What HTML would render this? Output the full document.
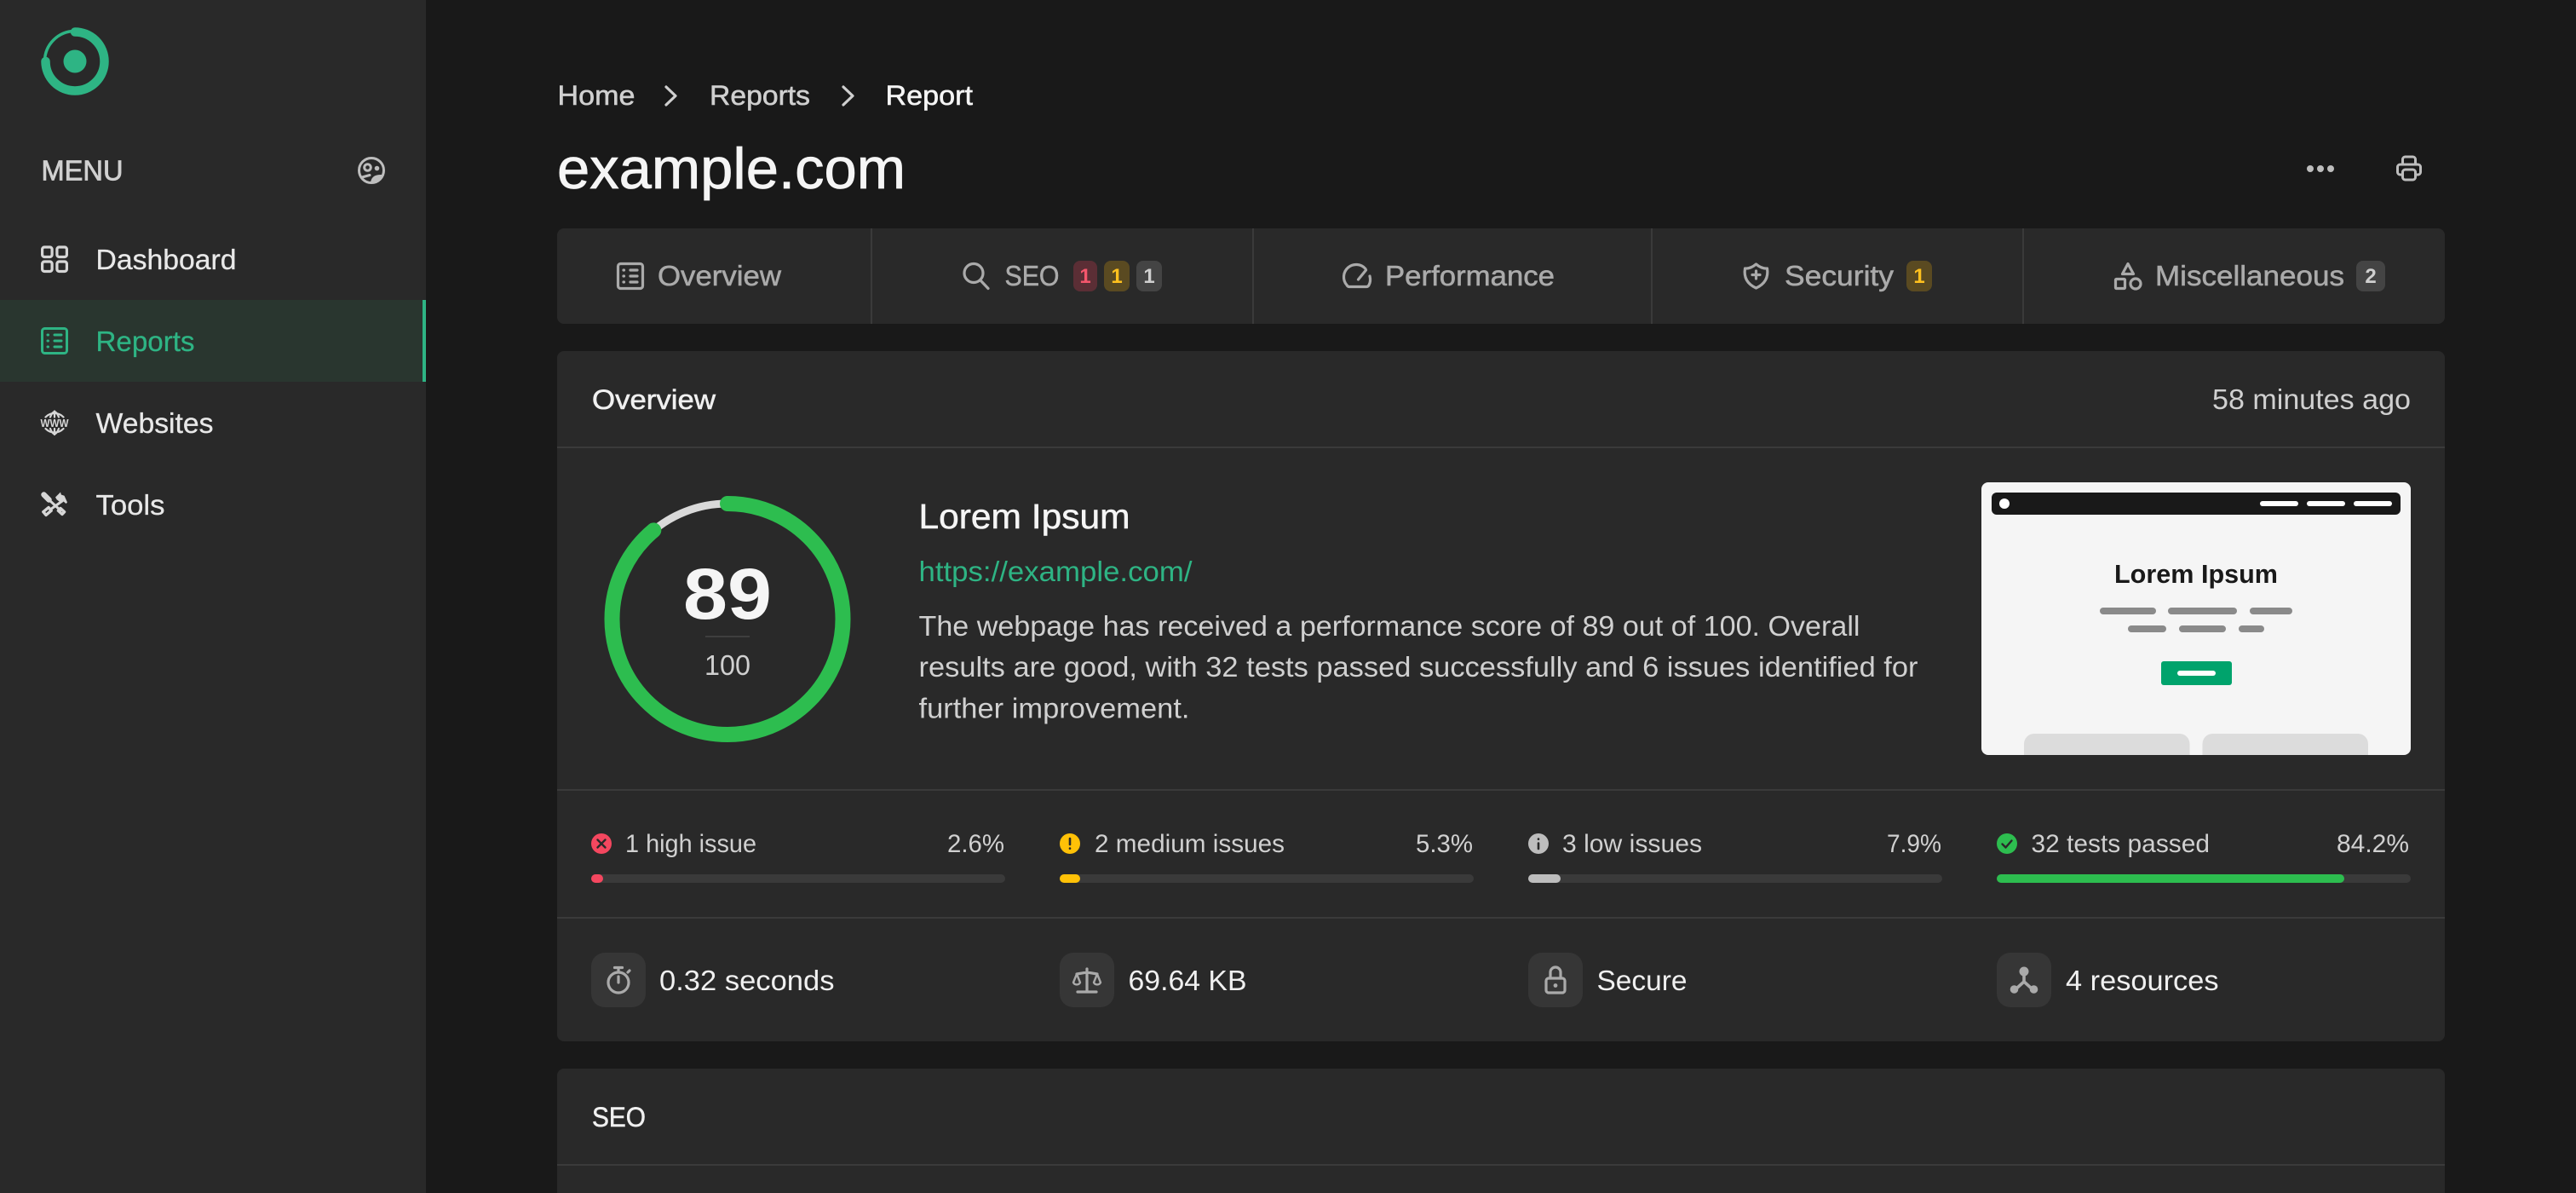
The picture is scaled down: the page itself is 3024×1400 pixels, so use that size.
<!DOCTYPE html>
<html lang="en">
<head>
<meta charset="utf-8">
<title>example.com - Report</title>
<style>
html,body{margin:0;padding:0;background:#191919;width:3024px;height:1400px;overflow:hidden}
svg{display:block}
text{font-family:"Liberation Sans",sans-serif;white-space:pre}
.m{stroke-width:.55px}
.ic{fill:none;stroke-linecap:round;stroke-linejoin:round}
</style>
</head>
<body>
<svg xmlns="http://www.w3.org/2000/svg" width="3024" height="1400" viewBox="0 0 3024 1400">
<rect width="3024" height="1400" fill="#191919"/>

<!-- Sidebar -->
<rect x="0" y="0" width="500" height="1400" fill="#292929"/>
<rect x="0" y="352" width="500" height="96" fill="#29362f"/>
<rect x="496" y="352" width="4" height="96" fill="#2eb484"/>

<!-- Logo -->
<circle cx="88" cy="72" r="13.5" fill="#2eb484"/>
<circle cx="88" cy="72" r="35.5" fill="none" stroke="#2eb484" stroke-width="3.5"/>
<path d="M88 37.5 A34.5 34.5 0 1 1 53.5 72" fill="none" stroke="#2eb484" stroke-width="10.5" stroke-linecap="round"/>

<text x="48.5" y="211.5" font-size="33" textLength="96" lengthAdjust="spacingAndGlyphs" fill="#d0d0d0" stroke="#d0d0d0" stroke-width=".8">MENU</text>

<!-- theme icon -->
<g class="ic" stroke="#bdbdbd" stroke-width="3">
<circle cx="436" cy="200" r="14.5"/>
<circle cx="431.5" cy="196.5" r="3.8"/>
<path d="M425 208 L434 205.5"/>
</g>
<circle cx="442.5" cy="197.5" r="2.8" fill="#bdbdbd"/>
<path d="M435 214 C436 207 441 204.5 449 205 C448 210 443 214 437 215Z" fill="#bdbdbd"/>

<!-- Nav icons -->
<g class="ic" stroke="#d6d6d6" stroke-width="3.2">
<rect x="49.6" y="290" width="11.5" height="11.5" rx="2.5"/>
<rect x="66.9" y="290" width="11.5" height="11.5" rx="2.5"/>
<rect x="49.6" y="307" width="11.5" height="11.5" rx="2.5"/>
<rect x="66.9" y="307" width="11.5" height="11.5" rx="2.5"/>
</g>
<g class="ic" stroke="#2eb484" stroke-width="3">
<rect x="49.5" y="385.5" width="29" height="29" rx="3"/>
<path d="M64 393h8M64 400h8M64 407h8M56 393h.5M56 400h.5M56 407h.5"/>
</g>
<g class="ic" stroke="#d6d6d6" stroke-width="2.2">
<path d="M53.5 489.5 A14.5 14.5 0 0 1 74.5 489.5M59 489.5 Q64 477 69 489.5M64 482.5V489.5M53.5 503 A14.5 14.5 0 0 0 74.5 503M59 503 Q64 515.5 69 503M64 503V510"/>
</g>
<text x="47.5" y="501" font-size="13" font-weight="bold" textLength="33" lengthAdjust="spacingAndGlyphs" fill="#d6d6d6">WWW</text>
<!-- tools icon -->
<g class="ic" stroke="#d6d6d6">
<path d="M51.5 580.5L57.5 586.5" stroke-width="6.5"/>
<path d="M57.5 586.5L71 599" stroke-width="3"/>
<path d="M71 596.5l4.6 4.2-2.6 2.8-4.6-4.2z" stroke-width="3.4"/>
<path d="M73 588L59 598" stroke-width="3"/>
<path d="M57 595.5l3.2 3.7-6.2 5.2-3.2-3.7z" stroke-width="3.4"/>
</g>
<path d="M65 583.5l6-6 .8 3 3.7 1.3 3.5 7.7-1.5 1.5-4.2-3.5-3 1.6-3.8-3z" fill="#d6d6d6"/>

<text x="112.5" y="316" font-size="33.5" textLength="165" lengthAdjust="spacingAndGlyphs" fill="#e8e8e8" stroke="#e8e8e8" stroke-width=".3">Dashboard</text>
<text x="112.5" y="412" font-size="33.5" textLength="116" lengthAdjust="spacingAndGlyphs" fill="#2eb484" stroke="#2eb484" stroke-width=".3">Reports</text>
<text x="112.5" y="508" font-size="33.5" textLength="138" lengthAdjust="spacingAndGlyphs" fill="#e8e8e8" stroke="#e8e8e8" stroke-width=".3">Websites</text>
<text x="112.5" y="604" font-size="33.5" textLength="81" lengthAdjust="spacingAndGlyphs" fill="#e8e8e8" stroke="#e8e8e8" stroke-width=".3">Tools</text>

<!-- Breadcrumb -->
<text x="654.5" y="123" font-size="32" textLength="91" lengthAdjust="spacingAndGlyphs" fill="#d0d0d0" stroke="#d0d0d0" class="m">Home</text>
<path d="M782 102l11 10.5-11 10.5" class="ic" stroke="#cfcfcf" stroke-width="3.2"/>
<text x="833" y="123" font-size="32" textLength="118" lengthAdjust="spacingAndGlyphs" fill="#d0d0d0" stroke="#d0d0d0" class="m">Reports</text>
<path d="M990 102l11 10.5-11 10.5" class="ic" stroke="#cfcfcf" stroke-width="3.2"/>
<text x="1039.5" y="123" font-size="32" textLength="102.5" lengthAdjust="spacingAndGlyphs" fill="#f5f5f5" stroke="#f5f5f5" class="m">Report</text>

<text x="654" y="221" font-size="68" textLength="409" lengthAdjust="spacingAndGlyphs" fill="#f5f5f5" stroke="#f5f5f5" stroke-width=".8">example.com</text>

<!-- top right actions -->
<circle cx="2712" cy="198" r="4" fill="#bdbdbd"/>
<circle cx="2724" cy="198" r="4" fill="#bdbdbd"/>
<circle cx="2736" cy="198" r="4" fill="#bdbdbd"/>
<g transform="translate(2810 179.5) scale(1.5)" class="ic" stroke="#bdbdbd" stroke-width="2">
<path d="M17 17h2a2 2 0 0 0 2-2v-4a2 2 0 0 0-2-2h-14a2 2 0 0 0-2 2v4a2 2 0 0 0 2 2h2"/>
<path d="M17 9v-4a2 2 0 0 0-2-2h-6a2 2 0 0 0-2 2v4"/>
<path d="M7 15a2 2 0 0 1 2-2h6a2 2 0 0 1 2 2v4a2 2 0 0 1-2 2h-6a2 2 0 0 1-2-2z"/>
</g>

<!-- Tabs -->
<rect x="654" y="268" width="2216" height="112" rx="8" fill="#292929"/>
<rect x="1022" y="268" width="2" height="112" fill="#3a3a3a"/>
<rect x="1470" y="268" width="2" height="112" fill="#3a3a3a"/>
<rect x="1938" y="268" width="2" height="112" fill="#3a3a3a"/>
<rect x="2374" y="268" width="2" height="112" fill="#3a3a3a"/>

<g class="ic" stroke="#aaaaaa" stroke-width="3.2">
<rect x="725.5" y="309.5" width="29" height="29" rx="3"/>
<path d="M740 317h8M740 324h8M740 331h8M732 317h.5M732 324h.5M732 331h.5"/>
<circle cx="1143" cy="320.5" r="11"/>
<path d="M1151 329L1160 338.5"/>
<path d="M1603 315.5A14 14 0 0 0 1581 334.5Q1582 336.5 1584 336.5H1604Q1606 336.5 1607 334.5Q1609.5 330 1608 324"/>
<path d="M1603.5 317L1594.5 328"/>
<path d="M2061.5 310Q2068 315.5 2074.5 315Q2077 331 2061.5 338Q2046 331 2048.5 315Q2055 315.5 2061.5 310Z"/>
<path d="M2061.5 318v9M2057 322.5h9"/>
<path d="M2498 309.5L2504.5 321.5H2491.5Z"/>
<rect x="2483.5" y="327.5" width="11" height="11" rx="1"/>
<circle cx="2507" cy="333" r="6"/>
</g>

<text x="772" y="335" font-size="33.5" textLength="145" lengthAdjust="spacingAndGlyphs" fill="#aaaaaa" stroke="#aaaaaa" class="m">Overview</text>
<text x="1179.5" y="335" font-size="33.5" textLength="64" lengthAdjust="spacingAndGlyphs" fill="#aaaaaa" stroke="#aaaaaa" class="m">SEO</text>
<text x="1626" y="335" font-size="33.5" textLength="199" lengthAdjust="spacingAndGlyphs" fill="#aaaaaa" stroke="#aaaaaa" class="m">Performance</text>
<text x="2095" y="335" font-size="33.5" textLength="128" lengthAdjust="spacingAndGlyphs" fill="#aaaaaa" stroke="#aaaaaa" class="m">Security</text>
<text x="2530" y="335" font-size="33.5" textLength="222" lengthAdjust="spacingAndGlyphs" fill="#aaaaaa" stroke="#aaaaaa" class="m">Miscellaneous</text>

<rect x="1260" y="306" width="28" height="36" rx="8" fill="#5b2e35"/>
<text x="1274" y="332" font-size="24" font-weight="bold" text-anchor="middle" fill="#f4566c">1</text>
<rect x="1296" y="306" width="30" height="36" rx="8" fill="#5a4a21"/>
<text x="1311" y="332" font-size="24" font-weight="bold" text-anchor="middle" fill="#ffc11e">1</text>
<rect x="1334" y="306" width="30" height="36" rx="8" fill="#444444"/>
<text x="1349" y="332" font-size="24" font-weight="bold" text-anchor="middle" fill="#cfcfcf">1</text>
<rect x="2238" y="306" width="30" height="36" rx="8" fill="#5a4a21"/>
<text x="2253" y="332" font-size="24" font-weight="bold" text-anchor="middle" fill="#ffc11e">1</text>
<rect x="2766" y="306" width="34" height="36" rx="8" fill="#444444"/>
<text x="2783" y="332" font-size="24" font-weight="bold" text-anchor="middle" fill="#cfcfcf">2</text>

<!-- Overview card -->
<rect x="654" y="412" width="2216" height="810" rx="8" fill="#292929"/>
<rect x="654" y="524" width="2216" height="2" fill="#3a3a3a"/>
<rect x="654" y="926" width="2216" height="2" fill="#3a3a3a"/>
<rect x="654" y="1076" width="2216" height="2" fill="#3a3a3a"/>

<text x="695" y="480" font-size="32" textLength="145" lengthAdjust="spacingAndGlyphs" fill="#f0f0f0" stroke="#f0f0f0" class="m">Overview</text>
<text x="2597" y="480" font-size="33.5" textLength="233" lengthAdjust="spacingAndGlyphs" fill="#d0d0d0">58 minutes ago</text>

<!-- Gauge -->
<circle cx="854" cy="726.5" r="135.5" fill="none" stroke="#d9d9d9" stroke-width="9"/>
<circle cx="854" cy="726.5" r="135.5" fill="none" stroke="#2dbd4f" stroke-width="18" stroke-linecap="round" stroke-dasharray="757 900" transform="rotate(-90 854 726.5)"/>
<text x="802" y="726" font-size="84" font-weight="bold" textLength="104" lengthAdjust="spacingAndGlyphs" fill="#f5f5f5">89</text>
<rect x="828" y="746" width="52" height="2" fill="#3e3e3e"/>
<text x="827" y="792" font-size="33.5" textLength="54" lengthAdjust="spacingAndGlyphs" fill="#d0d0d0">100</text>

<!-- Summary -->
<text x="1078.5" y="620" font-size="41" textLength="248" lengthAdjust="spacingAndGlyphs" fill="#f5f5f5" stroke="#f5f5f5" class="m">Lorem Ipsum</text>
<text x="1078.5" y="682" font-size="33.5" textLength="321" lengthAdjust="spacingAndGlyphs" fill="#2eb484">https://example.com/</text>
<text x="1078.5" y="746" font-size="33.5" textLength="1105" lengthAdjust="spacingAndGlyphs" fill="#d0d0d0">The webpage has received a performance score of 89 out of 100. Overall</text>
<text x="1078.5" y="794" font-size="33.5" textLength="1173" lengthAdjust="spacingAndGlyphs" fill="#d0d0d0">results are good, with 32 tests passed successfully and 6 issues identified for</text>
<text x="1078.5" y="842.5" font-size="33.5" textLength="318" lengthAdjust="spacingAndGlyphs" fill="#d0d0d0">further improvement.</text>

<!-- Thumbnail -->
<rect x="2326" y="566" width="504" height="320" rx="8" fill="#f5f5f5"/>
<rect x="2338" y="578" width="480" height="26" rx="6" fill="#191919"/>
<circle cx="2353" cy="591" r="6" fill="#fff"/>
<rect x="2653" y="588" width="45" height="6" rx="3" fill="#fff"/>
<rect x="2708" y="588" width="45" height="6" rx="3" fill="#fff"/>
<rect x="2763" y="588" width="45" height="6" rx="3" fill="#fff"/>
<text x="2482" y="684" font-size="31" font-weight="bold" textLength="192" lengthAdjust="spacingAndGlyphs" fill="#191919">Lorem Ipsum</text>
<g fill="#8a8a8a">
<rect x="2465" y="713" width="66" height="8" rx="4"/>
<rect x="2545" y="713" width="81" height="8" rx="4"/>
<rect x="2641" y="713" width="50" height="8" rx="4"/>
<rect x="2498" y="734" width="45" height="8" rx="4"/>
<rect x="2558" y="734" width="55" height="8" rx="4"/>
<rect x="2628" y="734" width="30" height="8" rx="4"/>
</g>
<rect x="2537" y="776" width="83" height="28" rx="3" fill="#00a36c"/>
<rect x="2556" y="787" width="45" height="6" rx="3" fill="#fff"/>
<path d="M2376 886V873a12 12 0 0 1 12-12H2558.5a12 12 0 0 1 12 12V886Z" fill="#dcdcdc"/>
<path d="M2585.5 886V873a12 12 0 0 1 12-12H2768a12 12 0 0 1 12 12V886Z" fill="#dcdcdc"/>

<!-- Issue rows -->
<circle cx="706" cy="990" r="12" fill="#f4475f"/>
<path d="M701.5 985.5l9 9m0-9l-9 9" class="ic" stroke="#292929" stroke-width="2.4"/>
<circle cx="1256" cy="990" r="12" fill="#ffc107"/>
<path d="M1256 984v7M1256 995.5v.2" class="ic" stroke="#292929" stroke-width="2.6"/>
<circle cx="1806" cy="990" r="12" fill="#bdbdbd"/>
<path d="M1806 989.5v6.5M1806 984.5v.2" class="ic" stroke="#292929" stroke-width="2.6"/>
<circle cx="2356" cy="990" r="12" fill="#2dbd4f"/>
<path d="M2350.5 990.5l4 4 7-8" class="ic" stroke="#292929" stroke-width="2.4"/>

<text x="734" y="1000" font-size="29.5" textLength="154" lengthAdjust="spacingAndGlyphs" fill="#d0d0d0">1 high issue</text>
<text x="1112" y="1000" font-size="29.5" textLength="67" lengthAdjust="spacingAndGlyphs" fill="#d0d0d0">2.6%</text>
<text x="1285" y="1000" font-size="29.5" textLength="223" lengthAdjust="spacingAndGlyphs" fill="#d0d0d0">2 medium issues</text>
<text x="1662" y="1000" font-size="29.5" textLength="67" lengthAdjust="spacingAndGlyphs" fill="#d0d0d0">5.3%</text>
<text x="1834" y="1000" font-size="29.5" textLength="164" lengthAdjust="spacingAndGlyphs" fill="#d0d0d0">3 low issues</text>
<text x="2215" y="1000" font-size="29.5" textLength="64" lengthAdjust="spacingAndGlyphs" fill="#d0d0d0">7.9%</text>
<text x="2384.5" y="1000" font-size="29.5" textLength="209.5" lengthAdjust="spacingAndGlyphs" fill="#d0d0d0">32 tests passed</text>
<text x="2743" y="1000" font-size="29.5" textLength="85" lengthAdjust="spacingAndGlyphs" fill="#d0d0d0">84.2%</text>

<rect x="694" y="1026" width="486" height="10" rx="5" fill="#3a3a3a"/>
<rect x="694" y="1026" width="14" height="10" rx="5" fill="#f4475f"/>
<rect x="1244" y="1026" width="486" height="10" rx="5" fill="#3a3a3a"/>
<rect x="1244" y="1026" width="24" height="10" rx="5" fill="#ffc107"/>
<rect x="1794" y="1026" width="486" height="10" rx="5" fill="#3a3a3a"/>
<rect x="1794" y="1026" width="38" height="10" rx="5" fill="#bdbdbd"/>
<rect x="2344" y="1026" width="486" height="10" rx="5" fill="#3a3a3a"/>
<rect x="2344" y="1026" width="408" height="10" rx="5" fill="#2dbd4f"/>

<!-- Stats -->
<rect x="694" y="1118" width="64" height="64" rx="16" fill="#363636"/>
<rect x="1244" y="1118" width="64" height="64" rx="16" fill="#363636"/>
<rect x="1794" y="1118" width="64" height="64" rx="16" fill="#363636"/>
<rect x="2344" y="1118" width="64" height="64" rx="16" fill="#363636"/>

<g class="ic" stroke="#aaaaaa" stroke-width="3.2">
<circle cx="726" cy="1153" r="12"/>
<path d="M721.5 1135.5h9M726 1135.5v5M726 1153v-7M737 1141l2-2"/>
<path d="M1265 1164h22M1276 1137v27M1264 1143l12-2 12 2"/>
<path d="M1264 1143l-4 10a4.5 4.5 0 0 0 8 0zM1288 1143l-4 10a4.5 4.5 0 0 0 8 0z" stroke-width="2.4"/>
<rect x="1815" y="1148" width="22" height="17" rx="3"/>
<path d="M1820 1148v-7a6 6 0 0 1 12 0v7"/>
<path d="M2376 1145v7M2376 1152l-10 9M2376 1152l10 9" stroke-width="3.6"/>
</g>
<circle cx="1826" cy="1156.5" r="2.4" fill="#aaaaaa"/>
<circle cx="2376" cy="1140" r="5.5" fill="#aaaaaa"/>
<circle cx="2364.5" cy="1161" r="4.8" fill="#aaaaaa"/>
<circle cx="2387.5" cy="1161" r="4.8" fill="#aaaaaa"/>

<text x="774" y="1162" font-size="33.5" textLength="205.5" lengthAdjust="spacingAndGlyphs" fill="#f0f0f0">0.32 seconds</text>
<text x="1324.5" y="1162" font-size="33.5" textLength="139" lengthAdjust="spacingAndGlyphs" fill="#f0f0f0">69.64 KB</text>
<text x="1874.5" y="1162" font-size="33.5" textLength="106" lengthAdjust="spacingAndGlyphs" fill="#f0f0f0">Secure</text>
<text x="2425" y="1162" font-size="33.5" textLength="179.5" lengthAdjust="spacingAndGlyphs" fill="#f0f0f0">4 resources</text>

<!-- SEO card -->
<rect x="654" y="1254" width="2216" height="180" rx="8" fill="#292929"/>
<rect x="654" y="1366" width="2216" height="2" fill="#3a3a3a"/>
<text x="695" y="1322" font-size="32" textLength="63" lengthAdjust="spacingAndGlyphs" fill="#f0f0f0" stroke="#f0f0f0" class="m">SEO</text>
</svg>
</body>
</html>
